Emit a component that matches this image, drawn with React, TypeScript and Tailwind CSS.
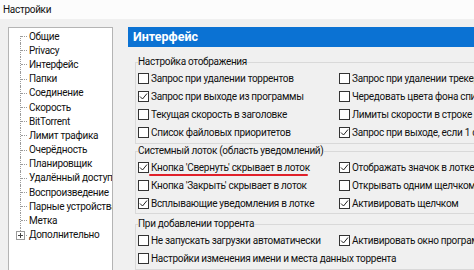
import React from "react"

const treeItems = [
    "Общие",
    "Privacy",
    "Интерфейс",
    "Папки",
    "Соединение",
    "Скорость",
    "BitTorrent",
    "Лимит трафика",
    "Очерёдность",
    "Планировщик",
    "Удалённый доступ",
    "Воспроизведение",
    "Парные устройства",
    "Метка",
    "Дополнительно",
]

function Check({ on, label, underline }: { on?: boolean; label: string; underline?: boolean }) {
    return (
        <div className="relative flex items-center h-[18px] whitespace-nowrap">
            <span className="w-[11px] h-[11px] shrink-0 border border-[#333333] bg-white mr-[2px] flex items-center justify-center">
                {on && (
                    <svg width="9" height="9" viewBox="0 0 9 9">
                        <polyline points="1,4.5 3.5,7 8,1.5" fill="none" stroke="#222222" strokeWidth="1" />
                    </svg>
                )}
            </span>
            <span>{label}</span>
            {underline && <span className="absolute left-[11px] top-[16px] w-[159px] h-[2px] bg-[#e0202a] rounded-full" />}
        </div>
    )
}

function Group({ title, className, children }: { title: string; className?: string; children: React.ReactNode }) {
    return (
        <fieldset className={"border border-[#d9d9d9] pl-[2px] " + (className ?? "")}>
            <legend className="leading-[14px] px-0">{title}</legend>
            {children}
        </fieldset>
    )
}

export default function App() {
    return (
        <div
            className="w-[474px] h-[270px] overflow-hidden bg-[#f0f0f0] text-[#111111] text-[10px] tracking-[-0.3px]"
            style={{ fontFamily: "Roboto, 'Noto Sans', sans-serif" }}
        >
            <div className="h-[19px] bg-[#fcfcfc] pl-[3px] flex items-center text-[10px]">Настройки</div>
            <div className="flex pl-[8px] pt-[8px]">
                {/* tree */}
                <div className="w-[105px] h-[260px] shrink-0 bg-white border border-[#b4b4b4] pt-[1px]">
                    {treeItems.map((item, i) => (
                        <div key={item} className="flex items-center h-[14.2px] whitespace-nowrap overflow-hidden">
                            <span className="relative w-[19px] h-full shrink-0">
                                <span
                                    className={
                                        "absolute left-[11px] w-0 border-l border-dotted border-[#9a9a9a] " +
                                        (i === 0 ? "top-[7px] bottom-0" : i === treeItems.length - 1 ? "top-0 h-[7px]" : "top-0 bottom-0")
                                    }
                                />
                                <span className="absolute left-[12px] top-[7px] w-[6px] border-t border-dotted border-[#9a9a9a]" />
                                {i === treeItems.length - 1 && (
                                    <span className="absolute left-[7px] top-[3px] w-[9px] h-[9px] bg-white border border-[#9a9a9a] flex items-center justify-center">
                                        <svg width="7" height="7" viewBox="0 0 7 7">
                                            <path d="M1 3.5h5M3.5 1v5" stroke="#444444" strokeWidth="1" />
                                        </svg>
                                    </span>
                                )}
                            </span>
                            <span className="pl-[1px]">{item}</span>
                        </div>
                    ))}
                </div>

                {/* right side */}
                <div className="ml-[15px] w-[420px] shrink-0">
                    <div className="h-[20px] bg-[#0b72d3] text-white font-bold text-[12.5px] tracking-[0px] pl-[5px] flex items-center">
                        Интерфейс
                    </div>
                    <div className="pl-[7px]">
                        <Group title="Настройка отображения" className="mt-[8px] pb-[2px]">
                            <div className="grid grid-cols-[201px_1fr]">
                                <Check label="Запрос при удалении торрентов" />
                                <Check label="Запрос при удалении трекеров" />
                                <Check on label="Запрос при выходе из программы" />
                                <Check label="Чередовать цвета фона списка" />
                                <Check label="Текущая скорость в заголовке" />
                                <Check label="Лимиты скорости в строке состояния" />
                                <Check label="Список файловых приоритетов" />
                                <Check on label="Запрос при выходе, если 1 сессия" />
                            </div>
                        </Group>
                        <Group title="Системный лоток (область уведомлений)" className="pb-[1px]">
                            <div className="grid grid-cols-[201px_1fr]">
                                <Check on underline label="Кнопка 'Свернуть' скрывает в лоток" />
                                <Check on label="Отображать значок в лотке" />
                                <Check label="Кнопка 'Закрыть' скрывает в лоток" />
                                <Check label="Открывать одним щелчком" />
                                <Check on label="Всплывающие уведомления в лотке" />
                                <Check on label="Активировать щелчком" />
                            </div>
                        </Group>
                        <Group title="При добавлении торрента" className="mt-[3px] pb-[2px]">
                            <div className="grid grid-cols-[201px_1fr]">
                                <Check label="Не запускать загрузки автоматически" />
                                <Check on label="Активировать окно программы" />
                                <div className="col-span-2">
                                    <Check label="Настройки изменения имени и места данных торрента" />
                                </div>
                            </div>
                        </Group>
                    </div>
                </div>
            </div>
        </div>
    )
}
